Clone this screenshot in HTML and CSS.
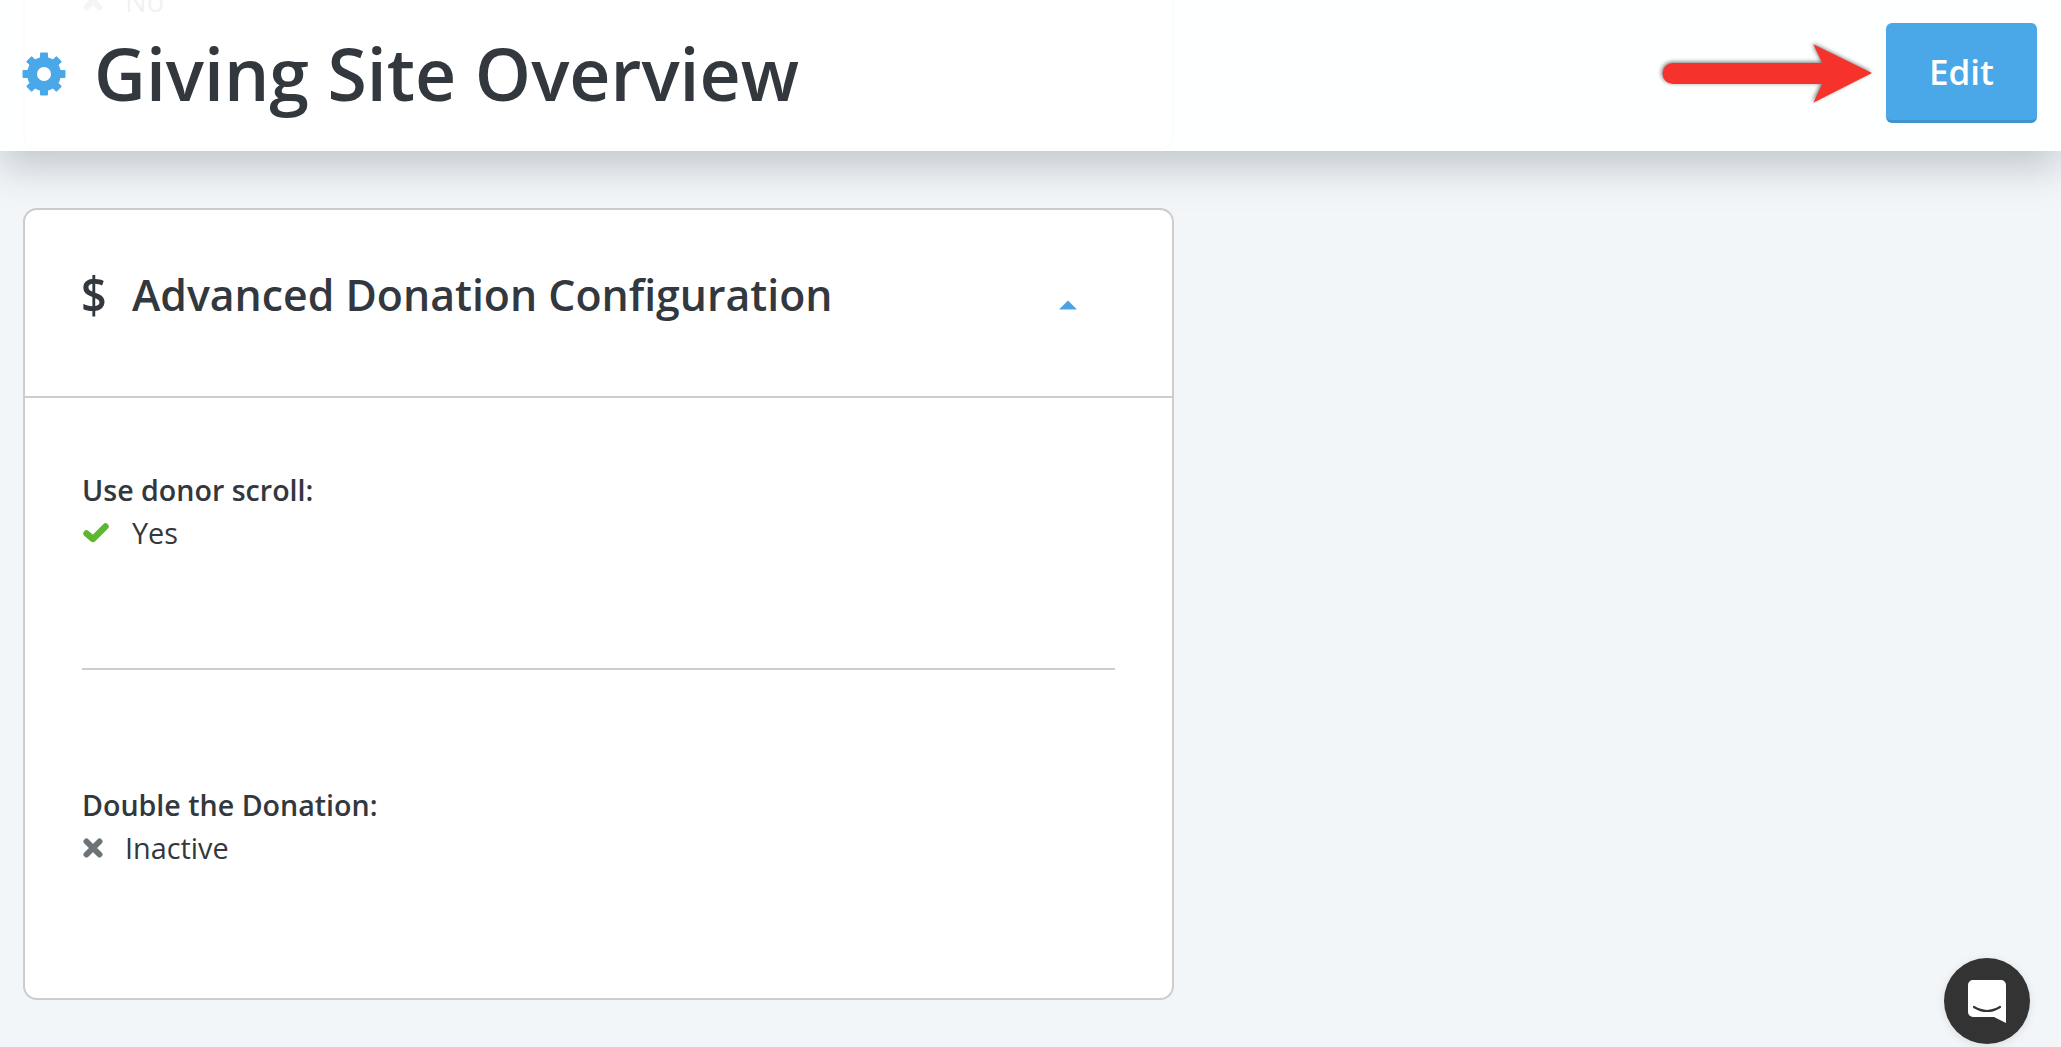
FILE: index.html
```html
<!DOCTYPE html>
<html lang="en">
<head>
<meta charset="utf-8">
<title>Giving Site Overview</title>
<link rel="stylesheet" href="styles.css">
</head>
<body>
<header class="topbar">
  <div class="topbar-title">
    <svg class="gear" viewBox="0 0 44 44" aria-hidden="true">
      <circle cx="22" cy="22" r="12" fill="none" stroke="#4aa8e8" stroke-width="10"/>
      <g fill="#4aa8e8">
        <rect x="18" y="0.5" width="8" height="8" rx="1"/>
        <rect x="18" y="35.5" width="8" height="8" rx="1"/>
        <rect x="0.5" y="18" width="8" height="8" rx="1"/>
        <rect x="35.5" y="18" width="8" height="8" rx="1"/>
        <g transform="rotate(45 22 22)">
          <rect x="18" y="0.5" width="8" height="8" rx="1"/>
          <rect x="18" y="35.5" width="8" height="8" rx="1"/>
          <rect x="0.5" y="18" width="8" height="8" rx="1"/>
          <rect x="35.5" y="18" width="8" height="8" rx="1"/>
        </g>
      </g>
    </svg>
    <h1 class="page-title">Giving Site Overview</h1>
  </div>
  <div class="topbar-actions">
    <svg class="arrow" viewBox="0 0 214 64" aria-hidden="true">
      <path d="M12 22 H162 L153 3 L212 32 L153 62 L162 43 H12 A10.500 10.500 0 0 1 12 22 Z" fill="#f5332c"/>
    </svg>
    <button class="edit-btn" type="button">Edit</button>
  </div>
</header>

<main class="page">
  <section class="card ghost">
    <div class="value ghost-value">
      <svg class="cross" viewBox="0 0 20 20" aria-hidden="true"><path d="M3.500 3.500 L16.500 16.500 M16.500 3.500 L3.500 16.500" stroke="#6d7478" stroke-width="6" stroke-linecap="round"/></svg>
      <span>No</span>
    </div>
  </section>

  <section class="card">
    <div class="card-head">
      <h2 class="card-title"><span class="dollar">$</span>Advanced Donation Configuration</h2>
      <svg class="caret" viewBox="0 0 18 10" aria-hidden="true"><path d="M9 .5 L17.500 9 Q17.500 9.500 17 9.500 H1 Q.5 9.500 .5 9 Z" fill="#4aa3e3"/></svg>
    </div>
    <div class="card-body">
      <div class="row">
        <div class="label">Use donor scroll:</div>
        <div class="value">
          <svg class="check" viewBox="0 0 26 20" aria-hidden="true"><path d="M3.500 10.500 L10 16 L22.500 3.500" fill="none" stroke="#5cb82f" stroke-width="6.400" stroke-linejoin="round" stroke-linecap="round"/></svg>
          <span>Yes</span>
        </div>
      </div>
      <div class="row">
        <div class="label">Double the Donation:</div>
        <div class="value">
          <svg class="cross" viewBox="0 0 20 20" aria-hidden="true"><path d="M3.500 3.500 L16.500 16.500 M16.500 3.500 L3.500 16.500" stroke="#6d7478" stroke-width="6" stroke-linecap="round"/></svg>
          <span>Inactive</span>
        </div>
      </div>
    </div>
  </section>
</main>

<button class="chat" type="button" aria-label="Open chat">
  <svg class="chat-icon" viewBox="0 0 38 43" aria-hidden="true">
    <path d="M5 0 H33 A5 5 0 0 1 38 5 V43 L26 37 H5 A5 5 0 0 1 0 32 V5 A5 5 0 0 1 5 0 Z" fill="#fff"/>
    <path d="M6 27 Q19 35 32 27" fill="none" stroke="#333" stroke-width="2.200" stroke-linecap="round"/>
  </svg>
</button>
</body>
</html>
```
FILE: styles.css
```css
* { box-sizing: border-box; }

html, body {
  margin: 0;
  height: 1047px;
  overflow: hidden;
}

body {
  background: #f2f6f9;
  color: #32383d;
  font-family: "Open Sans", "Liberation Sans", sans-serif;
}

.topbar {
  position: absolute;
  top: 0;
  left: 0;
  right: 0;
  z-index: 5;
  height: 151px;
  display: flex;
  align-items: center;
  justify-content: space-between;
  padding: 0 24px 0 22px;
  background: rgba(255, 255, 255, 0.93);
  box-shadow: 0 14px 40px rgba(40, 50, 60, 0.26);
}

.topbar-title {
  display: flex;
  align-items: center;
  gap: 28px;
  margin-top: -3px;
}

.gear {
  width: 44px;
  height: 44px;
  flex: none;
}

.page-title {
  margin: 0;
  font-size: 71.5px;
  font-weight: 600;
  line-height: 100px;
  color: #32383d;
}

.topbar-actions {
  display: flex;
  align-items: center;
  gap: 12px;
  margin-top: -5px;
}

.arrow {
  width: 213px;
  height: 64px;
  margin-top: 0;
  filter: drop-shadow(-1px -1px 2px rgba(0, 0, 0, 0.55));
}

.edit-btn {
  width: 151px;
  height: 100px;
  border: 0;
  border-bottom: 3px solid #3f94cf;
  border-radius: 6px;
  background: #4aa8e8;
  color: #fff;
  font: 600 35px "Open Sans", sans-serif;
}

.page {
  padding: 0 23px;
}

.card {
  width: 1151px;
  background: #fff;
  border: 2px solid #cbcdcf;
  border-radius: 14px;
}

.ghost {
  height: 150px;
  margin-bottom: 58px;
  padding: 0 57px;
  border-top: 0;
  border-top-left-radius: 0;
  border-top-right-radius: 0;
  overflow: hidden;
}

.ghost-value {
  margin-top: -21px;
}

.card-head {
  height: 188px;
  display: flex;
  align-items: flex-start;
  justify-content: space-between;
  padding: 52px 95px 0 56px;
  border-bottom: 2px solid #cbcdcf;
}

.card-title {
  margin: 0;
  display: flex;
  align-items: baseline;
  font-size: 42.8px;
  font-weight: 600;
  line-height: 64px;
}

.dollar {
  width: 51px;
  font-size: 45px;
  font-weight: 600;
  transform: scaleY(1.14);
}

.caret {
  width: 18px;
  height: 10px;
  margin-top: 38px;
}

.card-body {
  padding: 70px 57px 129px;
}

.row {
  padding-bottom: 114px;
}

.row + .row {
  padding-top: 113px;
  padding-bottom: 0;
  border-top: 2px solid #cbcdcf;
}

.label {
  font-size: 28.6px;
  font-weight: 600;
  line-height: 43px;
}

.value {
  display: flex;
  align-items: center;
  font-size: 28.8px;
  line-height: 43px;
}

.check {
  width: 26px;
  height: 20px;
  margin: 0 23px 0 1px;
  flex: none;
}

.cross {
  width: 20px;
  height: 20px;
  margin: 0 22px 0 1px;
  flex: none;
}

.chat {
  position: fixed;
  left: 1944px;
  top: 958px;
  width: 86px;
  height: 86px;
  display: flex;
  align-items: center;
  justify-content: center;
  padding: 0;
  border: 0;
  border-radius: 50%;
  background: #333;
  box-shadow: 0 2px 10px rgba(0, 0, 0, 0.1);
}

.chat-icon {
  width: 38px;
  height: 43px;
}
```
